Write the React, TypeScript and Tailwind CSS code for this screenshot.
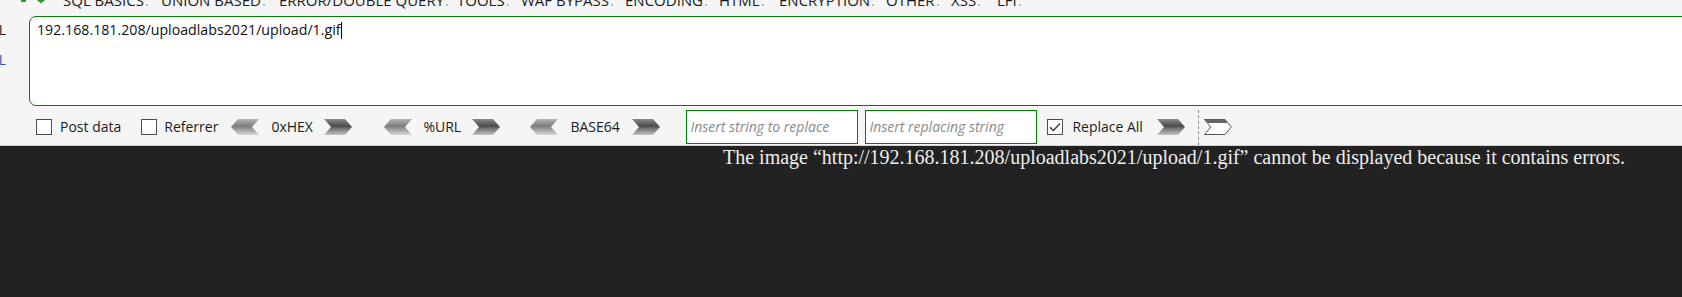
import React from 'react';

const menu: { label: string; w: string }[] = [
  { label: 'SQL BASICS', w: 'w-[98px]' },
  { label: 'UNION BASED', w: 'w-[118px]' },
  { label: 'ERROR/DOUBLE QUERY', w: 'w-[178px]' },
  { label: 'TOOLS', w: 'w-[64px]' },
  { label: 'WAF BYPASS', w: 'w-[104px]' },
  { label: 'ENCODING', w: 'w-[94px]' },
  { label: 'HTML', w: 'w-[60px]' },
  { label: 'ENCRYPTION', w: 'w-[107px]' },
  { label: 'OTHER', w: 'w-[65px]' },
  { label: 'XSS', w: 'w-[46px]' },
  { label: 'LFI', w: 'w-[40px]' },
];

// chevron buttons of the toolbar
const Arrow = ({ dir, tone }: { dir: 'left' | 'right' | 'outline'; tone?: 'light' | 'dark' }) => {
  const id = dir === 'left' ? 'gl' : 'gr';
  const pts = dir === 'left' ? '0,8 7,0 28,0 21,8 28,16 7,16' : '0,0 21,0 28,8 21,16 0,16 7,8';
  if (dir === 'outline') {
    return (
      <svg width="28" height="16" viewBox="0 0 28 16" className="shrink-0">
        <polygon points="0.5,0.5 21,0.5 27.3,8 21,15.5 0.5,15.5 6.8,8" fill="#ffffff" stroke="#555" strokeWidth="1" />
        <polygon points="0.5,0.5 21,0.5 24,4 3.5,4" fill="#666" />
      </svg>
    );
  }
  return (
    <svg width="28" height="16" viewBox="0 0 28 16" className="shrink-0">
      <defs>
        <linearGradient id={id} x1="0" y1="0" x2="0" y2="1">
          {tone === 'light' ? (
            <>
              <stop offset="0" stopColor="#b4b4b4" />
              <stop offset="0.45" stopColor="#7c7c7c" />
              <stop offset="0.55" stopColor="#8e8e8e" />
              <stop offset="1" stopColor="#d8d8d8" />
            </>
          ) : (
            <>
              <stop offset="0" stopColor="#8a8a8a" />
              <stop offset="0.45" stopColor="#4a4a4a" />
              <stop offset="0.55" stopColor="#6a6a6a" />
              <stop offset="1" stopColor="#c4c4c4" />
            </>
          )}
        </linearGradient>
      </defs>
      <polygon points={pts} fill={`url(#${id})`} />
    </svg>
  );
};

const Check = ({ checked }: { checked?: boolean }) => (
  <div className="w-[16px] h-[16px] shrink-0 border border-[#4d4d4d] bg-white flex items-center justify-center">
    {checked && (
      <svg width="12" height="10" viewBox="0 0 12 10">
        <path d="M1 5.2 L4.3 8.5 L11 1.5" fill="none" stroke="#333" strokeWidth="1.3" />
      </svg>
    )}
  </div>
);

export default function App() {
  return (
    <div className="w-[1682px] h-[297px] overflow-hidden bg-[#222222] font-['Open_Sans',sans-serif]">
      <div className="bg-[#f5f5f5]">
        {/* menu bar, scrolled so only its lower part shows */}
        <div className="h-[16px] overflow-hidden flex">
          <div className="w-[63px] shrink-0 relative">
            <svg width="50" height="6" viewBox="0 0 50 6" className="absolute left-0 top-0">
              <rect x="21" y="0" width="5" height="2" fill="#2e9e2e" />
              <path d="M37 0 L45 0 L41 3.5 Z" fill="#2e9e2e" />
            </svg>
          </div>
          {menu.map((m) => (
            <div key={m.label} className={`${m.w} shrink-0 flex items-start -mt-[7px] text-[15px] leading-[15px] text-[#1c1b22] whitespace-nowrap`}>
              <span>{m.label}</span>
              <span className="w-[2px] h-[2px] bg-[#bbb] mt-[11px] ml-[2px]" />
            </div>
          ))}
        </div>

        {/* url area */}
        <div className="flex h-[90px]">
          <div className="w-[29px] shrink-0 overflow-hidden text-[14px] leading-[19px]">
            <div className="w-[6px] overflow-hidden flex justify-end mt-[4px]">
              <span className="whitespace-nowrap text-[#1c1b22]">Load URL</span>
            </div>
            <div className="w-[6px] overflow-hidden flex justify-end mt-[11px]">
              <span className="whitespace-nowrap text-[#1a5fc8]">Split URL</span>
            </div>
          </div>
          <div className="flex-1 -mr-[12px] border border-[#008000] rounded-[7px] bg-white pl-[7px] pt-[3px] text-[14.2px] leading-[19px] text-[#111]">
            <span>192.168.181.208/uploadlabs2021/upload/1.gif</span>
            <span className="inline-block w-px h-[17px] bg-black align-[-4px]" />
          </div>
        </div>

        {/* toolbar */}
        <div className="h-[39px] flex items-center pt-[2px] text-[14px] text-[#1c1b22] whitespace-nowrap">
          <div className="ml-[36px]"><Check /></div>
          <span className="ml-[8px]">Post data</span>
          <div className="ml-[20px]"><Check /></div>
          <span className="ml-[7px]">Referrer</span>

          <div className="ml-[13px]"><Arrow dir="left" tone="light" /></div>
          <span className="ml-[12px] w-[41px]">0xHEX</span>
          <div className="ml-[12px]"><Arrow dir="right" /></div>

          <div className="ml-[32px]"><Arrow dir="left" tone="light" /></div>
          <span className="ml-[11px] w-[38px]">%URL</span>
          <div className="ml-[11px]"><Arrow dir="right" /></div>

          <div className="ml-[30px]"><Arrow dir="left" tone="light" /></div>
          <span className="ml-[12px] w-[51px]">BASE64</span>
          <div className="ml-[11px]"><Arrow dir="right" /></div>

          <div className="ml-[26px] w-[172px] h-[34px] border border-[#008000] bg-white flex items-center px-[3px] italic text-[#8a8a8a] overflow-hidden">
            Insert string to replace
          </div>
          <div className="ml-[7px] w-[172px] h-[34px] border border-[#008000] bg-white flex items-center px-[3px] italic text-[#8a8a8a] overflow-hidden">
            Insert replacing string
          </div>

          <div className="ml-[10px]"><Check checked /></div>
          <span className="ml-[9px]">Replace All</span>
          <div className="ml-[14px]"><Arrow dir="right" /></div>
          <div className="ml-[13px] self-stretch mt-[2px] border-l border-dashed border-[#8c8c8c]" />
          <div className="ml-[5px]"><Arrow dir="outline" /></div>
        </div>
      </div>
      <div className="h-px bg-[#d2d2d2]" />

      <div className="pl-[723px] font-['Liberation_Serif',serif] text-[20px] leading-[23px] text-[#eeeeee] whitespace-nowrap">
        The image “http://192.168.181.208/uploadlabs2021/upload/1.gif” cannot be displayed because it contains errors.
      </div>
    </div>
  );
}
